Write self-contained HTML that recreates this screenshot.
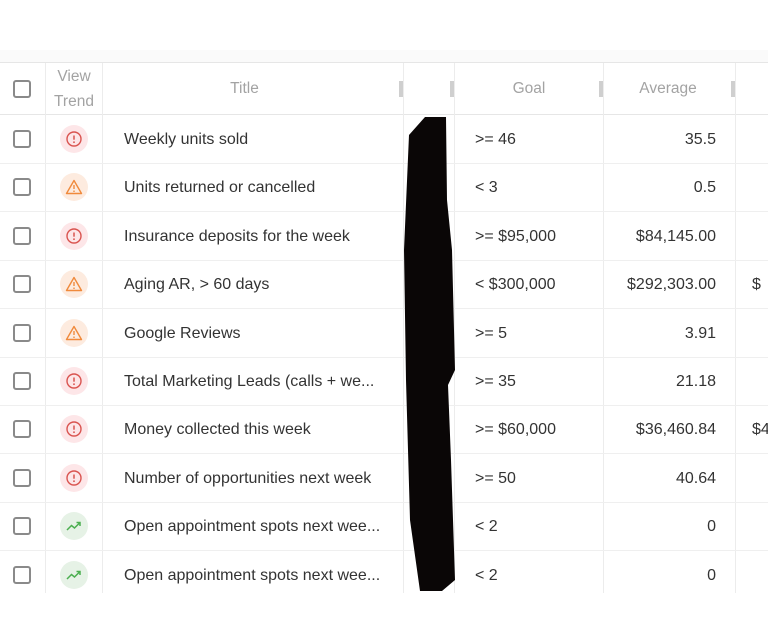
<!DOCTYPE html>
<html><head><style>
*{margin:0;padding:0;box-sizing:border-box}
body{width:768px;height:644px;background:#fff;font-family:"Liberation Sans",sans-serif;position:relative;overflow:hidden}
.band{position:absolute;left:0;top:50px;width:768px;height:13px;background:#fafafa;border-bottom:1px solid #e6e6e6}
.vl{position:absolute;top:63px;height:530px;width:1px;background:#ececec}
.hl{position:absolute;left:0;width:768px;height:1px;background:#efefef}
.t{position:absolute;font-size:16px;color:#333;line-height:18px;white-space:nowrap}
.h{position:absolute;font-size:15.5px;color:#a3a3a3;line-height:18px;text-align:center}
.cb{position:absolute;left:13px;width:18px;height:18px;border:2px solid #8a8a8a;border-radius:3px}
.ic{position:absolute;left:60px;width:28px;height:28px;border-radius:50%}
.grip{position:absolute;top:81px;width:4px;height:16px;background:#cfcfcf}
.r{text-align:right}
</style></head><body>
<div class="band"></div>
<div class="hl" style="top:114px;background:#e6e6e6"></div>
<div class="vl" style="left:45px"></div>
<div class="vl" style="left:102px"></div>
<div class="vl" style="left:403px"></div>
<div class="vl" style="left:454px"></div>
<div class="vl" style="left:603px"></div>
<div class="vl" style="left:735px"></div>
<div class="grip" style="left:399px"></div>
<div class="grip" style="left:450px"></div>
<div class="grip" style="left:599px"></div>
<div class="grip" style="left:731px"></div>
<div class="cb" style="top:80px"></div>
<div class="h" style="left:46px;width:56px;top:64px;line-height:25px">View<br>Trend</div>
<div class="h" style="left:102px;width:285px;top:80px">Title</div>
<div class="h" style="left:454px;width:150px;top:80px">Goal</div>
<div class="h" style="left:603px;width:130px;top:80px">Average</div>
<div id="rows"></div>
<svg style="position:absolute;left:0;top:0" width="768" height="644">
<path d="M425 117 L446 117 L447 200 L452 250 L455 370 L448 385 L451 460 L455 580 L442 591 L420 591 L410 520 L406 380 L404 250 L409 135 Z" fill="#0a0606"/>
</svg>
<script>
var d=[["e","Weekly units sold",">= 46","35.5",""],["w","Units returned or cancelled","< 3","0.5",""],["e","Insurance deposits for the week",">= $95,000","$84,145.00",""],["w","Aging AR, > 60 days","< $300,000","$292,303.00","$"],["w","Google Reviews",">= 5","3.91",""],["e","Total Marketing Leads (calls + we...",">= 35","21.18",""],["e","Money collected this week",">= $60,000","$36,460.84","$4"],["e","Number of opportunities next week",">= 50","40.64",""],["g","Open appointment spots next wee...","< 2","0",""],["g","Open appointment spots next wee...","< 2","0",""]];
var h="";
d.forEach(function(r,i){var c=139+i*48.4;
if(i<9)h+='<div class="hl" style="top:'+(c+24)+'px"></div>';
h+='<div class="cb" style="top:'+(c-9)+'px"></div>';
var ic;
if(r[0]=="e")ic='<div class="ic" style="top:'+(c-14)+'px;background:#fde6e8"><svg width="28" height="28"><circle cx="14" cy="14" r="7" fill="none" stroke="#d9534f" stroke-width="1.4"/><path d="M14 10.5v4.2" stroke="#d9534f" stroke-width="1.5"/><circle cx="14" cy="17.2" r=".9" fill="#d9534f"/></svg></div>';
else if(r[0]=="w")ic='<div class="ic" style="top:'+(c-14)+'px;background:#fdebdf"><svg width="28" height="28"><path d="M14 7.5 L21.5 20.5 H6.5 Z" fill="none" stroke="#f08a3c" stroke-width="1.4" stroke-linejoin="round"/><path d="M14 12v4" stroke="#f08a3c" stroke-width="1.4"/><circle cx="14" cy="18.2" r=".8" fill="#f08a3c"/></svg></div>';
else ic='<div class="ic" style="top:'+(c-14)+'px;background:#e6f2e6"><svg width="28" height="28"><path d="M7 18 L11.5 13.5 L14.5 16 L20 10.5 M16.5 10.5 H20 V14" fill="none" stroke="#4caf50" stroke-width="1.5"/></svg></div>';
h+=ic;
h+='<div class="t" style="left:124px;top:'+(c-8)+'px">'+r[1]+'</div>';
h+='<div class="t" style="left:475px;top:'+(c-8)+'px">'+r[2].replace("<","&lt;")+'</div>';
h+='<div class="t r" style="left:583px;width:133px;top:'+(c-8)+'px">'+r[3]+'</div>';
if(r[4])h+='<div class="t" style="left:752px;top:'+(c-8)+'px">'+r[4]+'</div>';
});
document.getElementById("rows").innerHTML=h;
</script>
</body></html>
